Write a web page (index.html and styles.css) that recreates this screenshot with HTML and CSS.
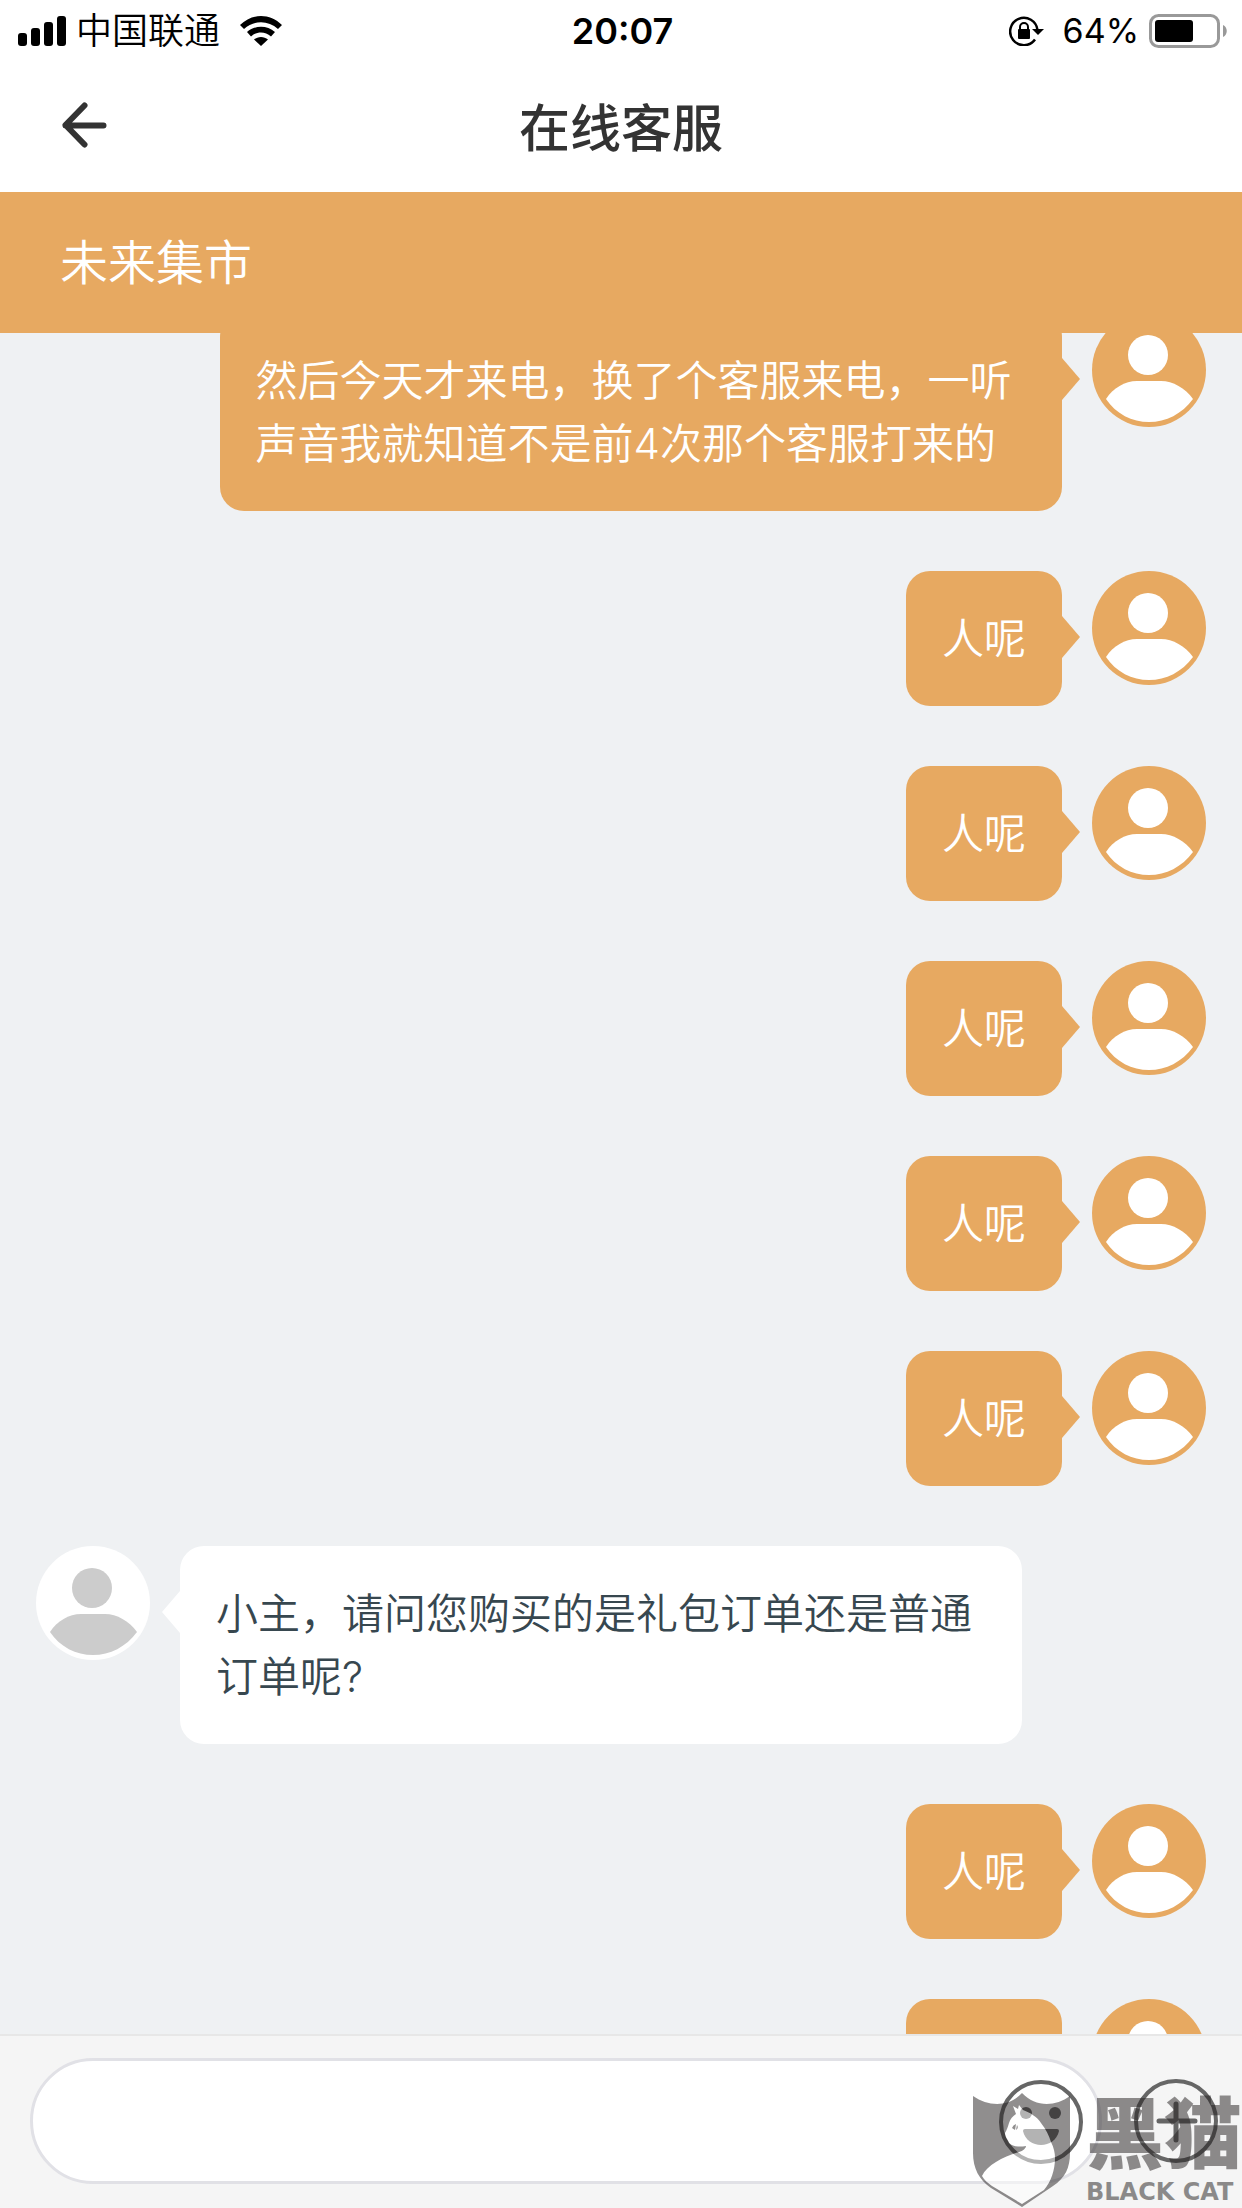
FILE: index.html
```
<!DOCTYPE html>
<html lang="zh-CN">
  <head>
    <meta charset="UTF-8"/>
    <meta name="viewport" content="width=device-width, initial-scale=1"/>
    <title>在线客服</title>
    <link rel="stylesheet" href="styles.css">
  </head>
  <body>
    <!-- shared shapes -->
    <svg class="sprite" aria-hidden="true">
      <symbol id="person" viewBox="0 0 114 114">
        <circle cx="56" cy="42" r="20"/>
        <path d="M14 86 C21 75 33 68 45 68 H69 C81 68 93 75 101 86 C90 101 74 109 57 109 C40 109 24 101 14 86 Z"/>
      </symbol>
    </svg>

    <div class="page">
      <div class="statusbar">
        <div class="statusbar-side">
          <svg class="signal" viewBox="0 0 48 30" width="48" height="30">
            <rect x="0" y="17" width="9" height="13" rx="3"/>
            <rect x="13" y="12" width="9" height="18" rx="3"/>
            <rect x="26" y="6" width="9" height="24" rx="3"/>
            <rect x="39" y="0" width="9" height="30" rx="3"/>
          </svg>
          <span class="carrier">中国联通</span>
          <svg class="wifi" viewBox="0 0 42 30" width="42" height="30">
            <path d="M0 9 C12 -3 30 -3 42 9 L38 13 C28 4 14 4 4 13 Z"/>
            <path d="M7 16 C15 9 27 9 35 16 L31 20.500 C25 15 17 15 11 20.500 Z"/>
            <path d="M14 23.500 C18 20 24 20 28 23.500 L21 30 Z"/>
          </svg>
        </div>
        <span class="clock">20:07</span>
        <div class="statusbar-side statusbar-right">
          <svg class="lock" viewBox="0 0 36 30" width="36" height="30">
            <path d="M26 23.500 A13.700 13.700 0 1 1 28.500 14" fill="none" stroke="#000" stroke-width="2.500"/>
            <path d="M23 13 H35 L29 19 Z"/>
            <rect x="9" y="13" width="12" height="10" rx="1"/>
            <path d="M11 14 V11 a4 4 0 0 1 8 0 V14" fill="none" stroke="#000" stroke-width="2"/>
          </svg>
          <span class="percent">64%</span>
          <svg class="battery" viewBox="0 0 78 34" width="78" height="34">
            <rect x="1.500" y="1.500" width="68" height="31" rx="8" fill="none" stroke="#999" stroke-width="3"/>
            <rect x="6" y="6" width="38" height="22" rx="3"/>
            <path d="M74 11 C79 13 79 21 74 23 Z" fill="#999"/>
          </svg>
        </div>
      </div>

      <header class="header">
        <button class="back" type="button" aria-label="返回">
          <svg viewBox="0 0 46 46" width="46" height="46">
            <path d="M22.500 3.500 L3.500 23 L22.500 42.500 M3.500 23.500 H41.500"/>
          </svg>
        </button>
        <h1>在线客服</h1>
      </header>

      <h2 class="shop">未来集市</h2>

      <main class="chat">
        <div class="messages">
          <div class="message mine">
            <svg class="avatar"><use href="#person"/></svg>
            <p class="bubble">然后今天才来电，换了个客服来电，一听声音我就知道不是前4次那个客服打来的</p>
          </div>
          <div class="message mine">
            <svg class="avatar"><use href="#person"/></svg>
            <p class="bubble">人呢</p>
          </div>
          <div class="message mine">
            <svg class="avatar"><use href="#person"/></svg>
            <p class="bubble">人呢</p>
          </div>
          <div class="message mine">
            <svg class="avatar"><use href="#person"/></svg>
            <p class="bubble">人呢</p>
          </div>
          <div class="message mine">
            <svg class="avatar"><use href="#person"/></svg>
            <p class="bubble">人呢</p>
          </div>
          <div class="message mine">
            <svg class="avatar"><use href="#person"/></svg>
            <p class="bubble">人呢</p>
          </div>
          <div class="message">
            <svg class="avatar"><use href="#person"/></svg>
            <p class="bubble">小主，请问您购买的是礼包订单还是普通订单呢?</p>
          </div>
          <div class="message mine">
            <svg class="avatar"><use href="#person"/></svg>
            <p class="bubble">人呢</p>
          </div>
          <div class="message mine">
            <svg class="avatar"><use href="#person"/></svg>
            <p class="bubble">人呢</p>
          </div>
        </div>
      </main>

      <form class="composer">
        <div class="field">
          <input type="text" aria-label="输入消息">
          <button class="smile" type="button" aria-label="表情">
            <svg viewBox="0 0 84 84" width="84" height="84">
              <circle cx="42" cy="42" r="40" fill="none" stroke="#666" stroke-width="4"/>
              <circle cx="27" cy="33" r="6"/>
              <circle cx="56" cy="33" r="6"/>
              <path d="M26 49 H58 Q60 49 60 51 C58 60 50 65 42 65 C34 65 26 60 24 51 Q24 49 26 49 Z"/>
            </svg>
          </button>
        </div>
        <button class="more" type="button" aria-label="更多">
          <svg viewBox="0 0 84 84" width="84" height="84">
            <circle cx="42" cy="42" r="40" fill="none" stroke="#666" stroke-width="4"/>
            <path d="M42 25 V61 M25 42 H61" fill="none" stroke="#666" stroke-width="5" stroke-linecap="round"/>
          </svg>
        </button>
      </form>

      <div class="watermark">
        <svg viewBox="0 0 98 116" width="98" height="116">
          <path class="shield" d="M0 4 C16 15 36 15 49 1 C62 15 82 15 97 4 V61 C97 76 92 86 80 94 L49 115 L18 96 C6 88 0 76 0 61 Z"/>
          <path class="cat" d="M43 22 L40 14 L45 17 L46 13 L50 18 C58 21 64 25 68 31 C73 37 76 44 78 50 C81 56 82 61 82 66 C82 78 78 90 71 98 L49 112 L19 94 C15 91 11 88 9 84 C14 73 30 65 46 60 C50 59 53 56 53 54 C47 55 40 55 36 51 C35 48 32 45 32 41 C34 38 35 34 36 31 C37 27 40 24 43 22 Z"/>
          <path class="shield" d="M39 36 Q40 33 43 32 L42 38 Z M44 33 Q46 36 43 38 Z"/>
        </svg>
        <div class="watermark-text">
          <span class="watermark-name">黑猫</span>
          <span class="watermark-en">BLACK CAT</span>
        </div>
      </div>
    </div>
  </body>
</html>
```
FILE: styles.css
```
* { box-sizing: border-box; }
html, body { padding: 0; margin: 0; }
body {
    font-family: Inter, "Noto Sans CJK SC", sans-serif;
    color: #333;
    background: #EFF1F3;
}
h1, h2, p { margin: 0; font-weight: 350; }
svg { display: block; flex: none; }
button {
    padding: 0;
    border: 0;
    background: none;
    cursor: pointer;
}
.sprite { position: absolute; width: 0; height: 0; }
.page {
    position: relative;
    display: flex;
    flex-direction: column;
    height: 100vh;
    overflow: hidden;
}

/* phone status bar */
.statusbar {
    display: flex;
    align-items: center;
    height: 62px;
    padding: 0 15px 0 18px;
    background: #FFF;
    color: #000;
    font-size: 36px;
    line-height: 62px;
}
.statusbar-side {
    display: flex;
    flex: 1;
    align-items: center;
}
.statusbar-right { justify-content: flex-end; }
.carrier { margin: 0 20px 0 10px; font-weight: 350; }
.clock { font-weight: 600; }
.percent { margin: 0 10px 0 18px; font-size: 34px; }

.header {
    display: grid;
    grid-template-columns: 1fr auto 1fr;
    align-items: center;
    height: 130px;
    padding: 0 62px 4px;
    background: #FFF;
}
.header h1 {
    font-size: 51px;
    font-weight: 500;
}
.back { justify-self: start; }
.back path {
    fill: none;
    stroke: #333;
    stroke-width: 6;
    stroke-linecap: round;
    stroke-linejoin: round;
}
.shop {
    padding: 0 60px;
    background: #E7A961;
    color: #FFF;
    font-size: 48px;
    line-height: 141px;
}

/* conversation, scrolled a little past its first message */
.chat {
    flex: 1;
    min-height: 0;
    overflow: hidden;
}
.messages {
    display: flex;
    flex-direction: column;
    gap: 60px;
    margin-top: -20px;
    padding: 0 36px;
}
.message {
    display: flex;
    align-items: flex-start;
    gap: 30px;
}
.mine { flex-direction: row-reverse; }
.avatar {
    width: 114px;
    height: 114px;
    border-radius: 50%;
    background: #FFF;
    fill: #CCC;
}
.mine .avatar { background: #E7A961; fill: #FFF; }
.bubble {
    position: relative;
    max-width: 72%;
    padding: 36px;
    border-radius: 24px;
    background: #FFF;
    color: #37474F;
    font-size: 42px;
    line-height: 63px;
}
.mine .bubble { background: #E7A961; color: #FFF; }
.bubble::before {
    content: "";
    position: absolute;
    top: 45px;
    right: 100%;
    border: solid transparent;
    border-width: 21px 18px 21px 0;
    border-right-color: #FFF;
}
.mine .bubble::before {
    right: auto;
    left: 100%;
    border-width: 21px 0 21px 18px;
    border-left-color: #E7A961;
}

/* message input */
.composer {
    display: flex;
    align-items: center;
    gap: 32px;
    padding: 22px 24px 24px 30px;
    border-top: 2px solid #E7E7E7;
    background: #F5F5F5;
}
.field { position: relative; flex: 1; }
.field input {
    display: block;
    width: 100%;
    height: 126px;
    padding: 0 120px 0 48px;
    border: 3px solid #E1E1E6;
    border-radius: 63px;
    background: #FFF;
    font: inherit;
    font-size: 42px;
    outline: none;
}
.smile { position: absolute; top: 22px; right: 19px; fill: #666; }

/* stamp over the corner of the page */
.watermark {
    position: absolute;
    right: 0;
    bottom: 0;
    display: flex;
    align-items: flex-start;
    gap: 15px;
    color: #231F20;
    opacity: 0.5;
    pointer-events: none;
}
.shield { fill: #231F20; }
.cat { fill: #FFF; }
.watermark-text { display: flex; flex-direction: column; }
.watermark-name {
    font-size: 78px;
    font-weight: 900;
    line-height: 86px;
}
.watermark-en {
    font-family: "DejaVu Sans", sans-serif;
    font-size: 24px;
    font-weight: 700;
    line-height: 28px;
}
```
